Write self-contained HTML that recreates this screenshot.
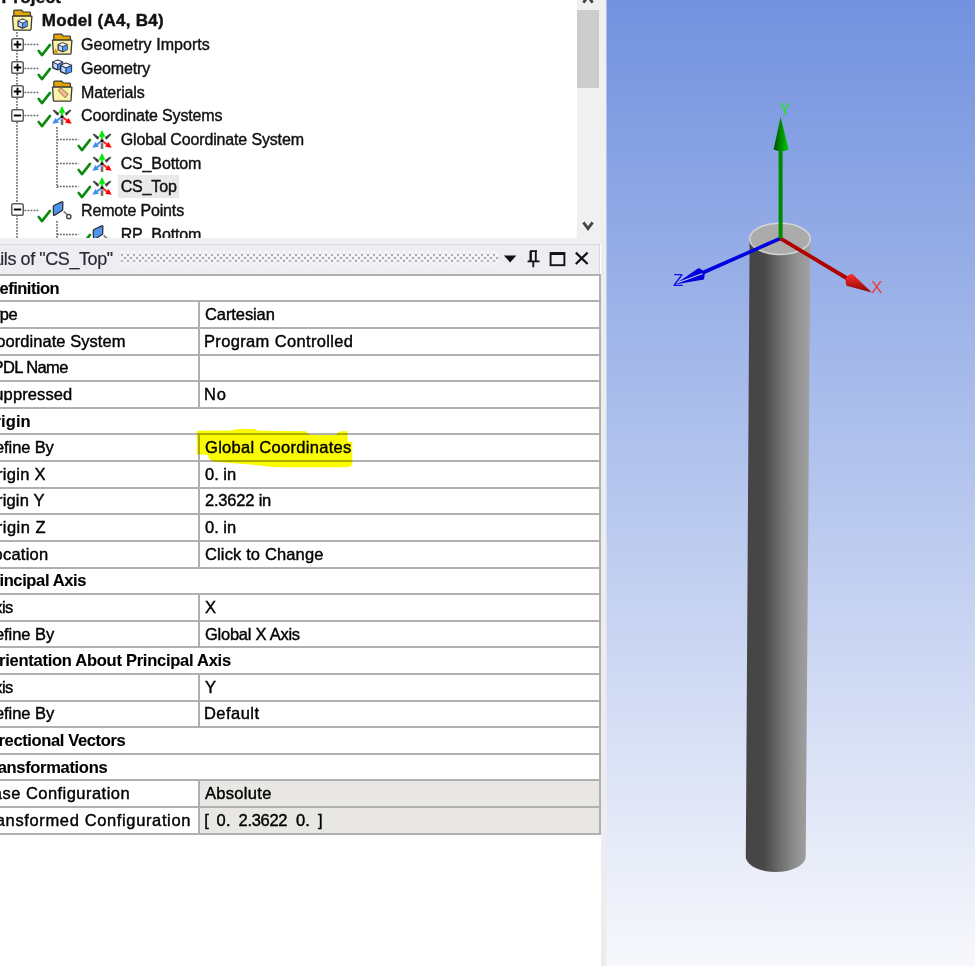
<!DOCTYPE html>
<html><head><meta charset="utf-8">
<style>
html,body{margin:0;padding:0;}
body{width:975px;height:966px;position:relative;overflow:hidden;background:#fff;font-family:"Liberation Sans",sans-serif;color:#000;}
.a{position:absolute;}
#tree{left:0;top:0;width:577px;height:238px;background:#fff;overflow:hidden;}
#sb{left:577px;top:0;width:29px;height:238px;background:#f0f0f0;}
#gap{left:0;top:238px;width:606px;height:6px;background:#f0f0f0;}
#strip{left:601px;top:238px;width:5px;height:728px;background:#ededef;}
#hdr{left:0;top:244px;width:599px;height:29px;background:#eeeef2;border-top:1px solid #d6d6e2;border-right:1px solid #d6d6e2;}
#vp{left:606px;top:0;width:369px;height:966px;background:linear-gradient(#7292df,#f7f8fc);}
.hl{position:absolute;left:0;width:600px;height:2px;background:#b0b0b0;}
.vl{position:absolute;width:2px;background:#b0b0b0;}
.ro{position:absolute;left:200px;width:399px;background:#e8e7e3;}
.lab{position:absolute;font-size:16.5px;white-space:pre;line-height:1;-webkit-text-stroke:0.4px #000;}
.val{position:absolute;left:204.5px;font-size:16.5px;letter-spacing:0.3px;white-space:pre;line-height:1;-webkit-text-stroke:0.4px #000;}
.b{font-weight:bold;-webkit-text-stroke:0.1px #000;}
.tt{position:absolute;font-size:16px;letter-spacing:-0.15px;white-space:pre;line-height:1;color:#111;-webkit-text-stroke:0.4px #111;}
svg{position:absolute;overflow:visible;}
</style></head><body>
<svg width="0" height="0" style="position:absolute">
<defs>
<symbol id="chk" viewBox="0 0 13 12" overflow="visible"><path d="M0.7 7.0 L4.0 11.1 L12.0 0.9" fill="none" stroke="#0d8a0d" stroke-width="2.6" stroke-linejoin="round" stroke-linecap="round"/></symbol>
<symbol id="plus" viewBox="0 0 13 13" overflow="visible"><rect x="0.75" y="0.75" width="11.5" height="11.5" rx="1.8" fill="#fff" stroke="#5e5e5e" stroke-width="1.5"/><path d="M2.8 6.5 H10.2 M6.5 2.8 V10.2" stroke="#000" stroke-width="1.9"/></symbol>
<symbol id="minus" viewBox="0 0 13 13" overflow="visible"><rect x="0.75" y="0.75" width="11.5" height="11.5" rx="1.8" fill="#fff" stroke="#5e5e5e" stroke-width="1.5"/><path d="M2.8 6.5 H10.2" stroke="#000" stroke-width="1.9"/></symbol>
<symbol id="folder" viewBox="0 0 20 20" overflow="visible">
<path d="M1.8 6 V1 Q1.8 0.2 2.6 0.2 H9.6 L11.2 2 H17.6 Q18.4 2 18.4 2.8 V6 Z" fill="#e3a500" stroke="#3a3a3a" stroke-width="1.2"/>
<path d="M0.5 6.2 H19.9 L19 19.4 Q18.9 20.1 18.2 20.1 H2.2 Q1.5 20.1 1.4 19.4 Z" fill="#fcf3a6" stroke="#3a3a3a" stroke-width="1.3" stroke-linejoin="round"/>
</symbol>
<symbol id="cube" viewBox="0 0 10 10" overflow="visible">
<path d="M5 0.5 L9.5 2.4 V7.6 L5 9.5 L0.5 7.6 V2.4 Z" fill="#bcd8ff" stroke="#2a2a3a" stroke-width="1.2" stroke-linejoin="round"/>
<path d="M5 4.6 V9.3 L9.3 7.5 V2.6 Z" fill="#4f98ff"/>
<path d="M0.8 2.5 L5 0.8 L9.2 2.5 L5 4.3 Z" fill="#eef4ff"/>
<path d="M0.6 2.5 L5 4.5 L9.4 2.5 M5 4.5 V9.4" fill="none" stroke="#2e2e40" stroke-width="0.9"/>
</symbol>
<symbol id="cs" viewBox="0 0 20 20" overflow="visible">
<path d="M1.2 4.6 L1.9 4.0 L6.8 7.4 L5.6 9.3 Z" fill="#3a3a3a" stroke="#3a3a3a" stroke-width="0.9" stroke-linejoin="round"/>
<path d="M18.8 4.6 L18.1 4.0 L13.2 7.4 L14.4 9.3 Z" fill="#3a3a3a" stroke="#3a3a3a" stroke-width="0.9" stroke-linejoin="round"/>
<path d="M10 13.2 V18.9" stroke="#707070" stroke-width="2.6"/>
<path d="M10 6 V10" stroke="#33e033" stroke-width="2.6"/>
<path d="M6.7 6.8 L10 0 L13.3 6.8 Z" fill="#00e800"/>
<path d="M9.2 11.4 L4.6 14.6" stroke="#5599ee" stroke-width="2.2"/>
<path d="M0.3 17.8 L3.4 11.9 L6.9 16.7 Z" fill="#3d8ef0"/>
<path d="M10.8 11.4 L15.4 14.6" stroke="#ff3333" stroke-width="2.2"/>
<path d="M19.7 17.8 L16.6 11.9 L13.1 16.7 Z" fill="#ff0000"/>
<circle cx="10" cy="10.8" r="1.5" fill="#111"/>
</symbol>
<symbol id="rp" viewBox="0 0 20 20" overflow="visible">
<path d="M11.6 11.4 L15.4 14.8" stroke="#777" stroke-width="1.5"/>
<circle cx="16.8" cy="16.6" r="2.1" fill="#fff" stroke="#4a4a4a" stroke-width="1.5"/>
<path d="M1.2 6.6 Q1.4 5.6 2.4 5.2 L9.8 1.9 Q10.9 1.5 10.9 2.6 L10.7 9.6 Q10.6 10.4 9.8 10.8 L2.6 15.2 Q1.6 15.8 1.5 14.6 Z" fill="#4d94ee" stroke="#2a2a2a" stroke-width="1.2" stroke-linejoin="round"/>
</symbol>
</defs>
</svg>
<div id="tree" class="a">
<svg style="left:0;top:0" width="577" height="238"><line x1="17" y1="32" x2="17" y2="240" stroke="#686868" stroke-width="1.6" stroke-dasharray="1.8 1.2"/></svg>
<svg style="left:0;top:0" width="577" height="238"><line x1="57" y1="127" x2="57" y2="188" stroke="#686868" stroke-width="1.6" stroke-dasharray="1.8 1.2"/></svg>
<svg style="left:0;top:0" width="577" height="238"><line x1="57" y1="221" x2="57" y2="240" stroke="#686868" stroke-width="1.6" stroke-dasharray="1.8 1.2"/></svg>
<div class="tt b" style="left:1.6px;top:-11.5px;font-size:17px;letter-spacing:0.3px">Project</div>
<svg style="left:12px;top:10.2px" width="20" height="20"><use href="#folder" width="20" height="20"/><use href="#cube" x="5.6" y="8.6" width="10" height="10"/></svg>
<div class="tt b" style="left:41.8px;top:11.8px;font-size:17px;letter-spacing:0.3px">Model (A4, B4)</div>
<svg style="left:0;top:0" width="577" height="238"><line x1="24.5" y1="44.5" x2="39" y2="44.5" stroke="#686868" stroke-width="1.6" stroke-dasharray="1.8 1.2"/></svg>
<svg style="left:10.5px;top:37.67px" width="13" height="13"><use href="#plus" width="13" height="13"/></svg>
<svg style="left:38px;top:44.17px" width="13" height="12"><use href="#chk" width="13" height="12"/></svg>
<svg style="left:52px;top:33.97px" width="20" height="20"><use href="#folder" width="20" height="20"/><use href="#cube" x="5.6" y="8.2" width="10" height="10"/><path d="M3.5 14 L4.6 16.4 L7 16.4 L5.2 17.8 L6 20 L3.8 18.6 L2 20 L2.6 17.8 L1 16.4 L3 16.4 Z" fill="#d98a00"/></svg>
<div class="tt" style="left:81px;letter-spacing:0.05px;top:37.27px">Geometry Imports</div>
<svg style="left:0;top:0" width="577" height="238"><line x1="24.5" y1="68.5" x2="39" y2="68.5" stroke="#686868" stroke-width="1.6" stroke-dasharray="1.8 1.2"/></svg>
<svg style="left:10.5px;top:61.34px" width="13" height="13"><use href="#plus" width="13" height="13"/></svg>
<svg style="left:38px;top:67.84px" width="13" height="12"><use href="#chk" width="13" height="12"/></svg>
<svg style="left:52px;top:59.34px" width="21" height="16"><use href="#cube" x="0.2" y="0.5" width="11" height="11"/><use href="#cube" x="8" y="3.5" width="12" height="12"/></svg>
<div class="tt" style="left:81px;top:60.94px">Geometry</div>
<svg style="left:0;top:0" width="577" height="238"><line x1="24.5" y1="92.5" x2="39" y2="92.5" stroke="#686868" stroke-width="1.6" stroke-dasharray="1.8 1.2"/></svg>
<svg style="left:10.5px;top:85.01px" width="13" height="13"><use href="#plus" width="13" height="13"/></svg>
<svg style="left:38px;top:91.51px" width="13" height="12"><use href="#chk" width="13" height="12"/></svg>
<svg style="left:52px;top:81.31px" width="20" height="20"><use href="#folder" width="20" height="20"/><path d="M6 9.5 L9 6.8 L16 13 L13.2 16.8 Z" fill="#f6b890" stroke="#8a7a50" stroke-width="1"/></svg>
<div class="tt" style="left:81px;top:84.61px">Materials</div>
<svg style="left:0;top:0" width="577" height="238"><line x1="24.5" y1="115.5" x2="39" y2="115.5" stroke="#686868" stroke-width="1.6" stroke-dasharray="1.8 1.2"/></svg>
<svg style="left:10.5px;top:108.68px" width="13" height="13"><use href="#minus" width="13" height="13"/></svg>
<svg style="left:38px;top:115.18px" width="13" height="12"><use href="#chk" width="13" height="12"/></svg>
<svg style="left:52px;top:105.88px" width="20" height="20"><use href="#cs" width="20" height="20"/></svg>
<div class="tt" style="left:81px;top:108.28px">Coordinate Systems</div>
<svg style="left:0;top:0" width="577" height="238"><line x1="57" y1="139.5" x2="78.5" y2="139.5" stroke="#686868" stroke-width="1.6" stroke-dasharray="1.8 1.2"/></svg>
<svg style="left:78px;top:138.85px" width="13" height="12"><use href="#chk" width="13" height="12"/></svg>
<svg style="left:92px;top:129.55px" width="20" height="20"><use href="#cs" width="20" height="20"/></svg>
<div class="tt" style="left:120.7px;top:131.95px">Global Coordinate System</div>
<svg style="left:0;top:0" width="577" height="238"><line x1="57" y1="163.5" x2="78.5" y2="163.5" stroke="#686868" stroke-width="1.6" stroke-dasharray="1.8 1.2"/></svg>
<svg style="left:78px;top:162.52px" width="13" height="12"><use href="#chk" width="13" height="12"/></svg>
<svg style="left:92px;top:153.22px" width="20" height="20"><use href="#cs" width="20" height="20"/></svg>
<div class="tt" style="left:120.7px;top:155.62px">CS_Bottom</div>
<svg style="left:0;top:0" width="577" height="238"><line x1="57" y1="186.5" x2="78.5" y2="186.5" stroke="#686868" stroke-width="1.6" stroke-dasharray="1.8 1.2"/></svg>
<div class="a" style="left:118px;top:174.5px;width:61px;height:23px;background:#e9e9e9"></div>
<svg style="left:78px;top:186.19px" width="13" height="12"><use href="#chk" width="13" height="12"/></svg>
<svg style="left:92px;top:176.89px" width="20" height="20"><use href="#cs" width="20" height="20"/></svg>
<div class="tt" style="left:120.7px;top:179.29px">CS_Top</div>
<svg style="left:0;top:0" width="577" height="238"><line x1="24.5" y1="210.5" x2="39" y2="210.5" stroke="#686868" stroke-width="1.6" stroke-dasharray="1.8 1.2"/></svg>
<svg style="left:10.5px;top:203.36px" width="13" height="13"><use href="#minus" width="13" height="13"/></svg>
<svg style="left:38px;top:209.86px" width="13" height="12"><use href="#chk" width="13" height="12"/></svg>
<svg style="left:52px;top:199.86px" width="20" height="20"><use href="#rp" width="20" height="20"/></svg>
<div class="tt" style="left:81px;top:202.96px">Remote Points</div>
<svg style="left:0;top:0" width="577" height="238"><line x1="57" y1="234.5" x2="78.5" y2="234.5" stroke="#686868" stroke-width="1.6" stroke-dasharray="1.8 1.2"/></svg>
<svg style="left:78px;top:233.53px" width="13" height="12"><use href="#chk" width="13" height="12"/></svg>
<svg style="left:92px;top:223.53px" width="20" height="20"><use href="#rp" width="20" height="20"/></svg>
<div class="tt" style="left:120.7px;top:226.63px">RP_Bottom</div>
</div>
<div id="sb" class="a"></div>
<div class="a" style="left:577px;top:10.3px;width:22px;height:78.1px;background:#cdcdcd"></div>
<svg style="left:0;top:0" width="606" height="238"><path d="M583.4 2.6 L588 -3.6 L592.6 2.6" fill="none" stroke="#444" stroke-width="2.8" stroke-linejoin="miter"/><path d="M583.4 222.4 L588 228.6 L592.6 222.4" fill="none" stroke="#444" stroke-width="2.8" stroke-linejoin="miter"/></svg>
<div id="gap" class="a"></div>
<div id="strip" class="a"></div>
<div id="hdr" class="a"></div>
<div class="a" style="left:-36px;top:249.5px;font-size:18px;letter-spacing:-0.43px;line-height:1;white-space:pre;color:#2a2a38;-webkit-text-stroke:0.2px #2a2a38">Details of "CS_Top"</div>
<svg style="left:0;top:0" width="600" height="274"><g fill="#fbfbfd"><rect x="121" y="251" width="2" height="2"/><rect x="121" y="263" width="2" height="2"/><rect x="121" y="257" width="2" height="2"/><rect x="124" y="254" width="2" height="2"/><rect x="124" y="260" width="2" height="2"/><rect x="127" y="251" width="2" height="2"/><rect x="127" y="263" width="2" height="2"/><rect x="127" y="257" width="2" height="2"/><rect x="130" y="254" width="2" height="2"/><rect x="130" y="260" width="2" height="2"/><rect x="133" y="251" width="2" height="2"/><rect x="133" y="263" width="2" height="2"/><rect x="133" y="257" width="2" height="2"/><rect x="136" y="254" width="2" height="2"/><rect x="136" y="260" width="2" height="2"/><rect x="139" y="251" width="2" height="2"/><rect x="139" y="263" width="2" height="2"/><rect x="139" y="257" width="2" height="2"/><rect x="142" y="254" width="2" height="2"/><rect x="142" y="260" width="2" height="2"/><rect x="145" y="251" width="2" height="2"/><rect x="145" y="263" width="2" height="2"/><rect x="145" y="257" width="2" height="2"/><rect x="148" y="254" width="2" height="2"/><rect x="148" y="260" width="2" height="2"/><rect x="151" y="251" width="2" height="2"/><rect x="151" y="263" width="2" height="2"/><rect x="151" y="257" width="2" height="2"/><rect x="154" y="254" width="2" height="2"/><rect x="154" y="260" width="2" height="2"/><rect x="157" y="251" width="2" height="2"/><rect x="157" y="263" width="2" height="2"/><rect x="157" y="257" width="2" height="2"/><rect x="160" y="254" width="2" height="2"/><rect x="160" y="260" width="2" height="2"/><rect x="163" y="251" width="2" height="2"/><rect x="163" y="263" width="2" height="2"/><rect x="163" y="257" width="2" height="2"/><rect x="166" y="254" width="2" height="2"/><rect x="166" y="260" width="2" height="2"/><rect x="169" y="251" width="2" height="2"/><rect x="169" y="263" width="2" height="2"/><rect x="169" y="257" width="2" height="2"/><rect x="172" y="254" width="2" height="2"/><rect x="172" y="260" width="2" height="2"/><rect x="175" y="251" width="2" height="2"/><rect x="175" y="263" width="2" height="2"/><rect x="175" y="257" width="2" height="2"/><rect x="178" y="254" width="2" height="2"/><rect x="178" y="260" width="2" height="2"/><rect x="181" y="251" width="2" height="2"/><rect x="181" y="263" width="2" height="2"/><rect x="181" y="257" width="2" height="2"/><rect x="184" y="254" width="2" height="2"/><rect x="184" y="260" width="2" height="2"/><rect x="187" y="251" width="2" height="2"/><rect x="187" y="263" width="2" height="2"/><rect x="187" y="257" width="2" height="2"/><rect x="190" y="254" width="2" height="2"/><rect x="190" y="260" width="2" height="2"/><rect x="193" y="251" width="2" height="2"/><rect x="193" y="263" width="2" height="2"/><rect x="193" y="257" width="2" height="2"/><rect x="196" y="254" width="2" height="2"/><rect x="196" y="260" width="2" height="2"/><rect x="199" y="251" width="2" height="2"/><rect x="199" y="263" width="2" height="2"/><rect x="199" y="257" width="2" height="2"/><rect x="202" y="254" width="2" height="2"/><rect x="202" y="260" width="2" height="2"/><rect x="205" y="251" width="2" height="2"/><rect x="205" y="263" width="2" height="2"/><rect x="205" y="257" width="2" height="2"/><rect x="208" y="254" width="2" height="2"/><rect x="208" y="260" width="2" height="2"/><rect x="211" y="251" width="2" height="2"/><rect x="211" y="263" width="2" height="2"/><rect x="211" y="257" width="2" height="2"/><rect x="214" y="254" width="2" height="2"/><rect x="214" y="260" width="2" height="2"/><rect x="217" y="251" width="2" height="2"/><rect x="217" y="263" width="2" height="2"/><rect x="217" y="257" width="2" height="2"/><rect x="220" y="254" width="2" height="2"/><rect x="220" y="260" width="2" height="2"/><rect x="223" y="251" width="2" height="2"/><rect x="223" y="263" width="2" height="2"/><rect x="223" y="257" width="2" height="2"/><rect x="226" y="254" width="2" height="2"/><rect x="226" y="260" width="2" height="2"/><rect x="229" y="251" width="2" height="2"/><rect x="229" y="263" width="2" height="2"/><rect x="229" y="257" width="2" height="2"/><rect x="232" y="254" width="2" height="2"/><rect x="232" y="260" width="2" height="2"/><rect x="235" y="251" width="2" height="2"/><rect x="235" y="263" width="2" height="2"/><rect x="235" y="257" width="2" height="2"/><rect x="238" y="254" width="2" height="2"/><rect x="238" y="260" width="2" height="2"/><rect x="241" y="251" width="2" height="2"/><rect x="241" y="263" width="2" height="2"/><rect x="241" y="257" width="2" height="2"/><rect x="244" y="254" width="2" height="2"/><rect x="244" y="260" width="2" height="2"/><rect x="247" y="251" width="2" height="2"/><rect x="247" y="263" width="2" height="2"/><rect x="247" y="257" width="2" height="2"/><rect x="250" y="254" width="2" height="2"/><rect x="250" y="260" width="2" height="2"/><rect x="253" y="251" width="2" height="2"/><rect x="253" y="263" width="2" height="2"/><rect x="253" y="257" width="2" height="2"/><rect x="256" y="254" width="2" height="2"/><rect x="256" y="260" width="2" height="2"/><rect x="259" y="251" width="2" height="2"/><rect x="259" y="263" width="2" height="2"/><rect x="259" y="257" width="2" height="2"/><rect x="262" y="254" width="2" height="2"/><rect x="262" y="260" width="2" height="2"/><rect x="265" y="251" width="2" height="2"/><rect x="265" y="263" width="2" height="2"/><rect x="265" y="257" width="2" height="2"/><rect x="268" y="254" width="2" height="2"/><rect x="268" y="260" width="2" height="2"/><rect x="271" y="251" width="2" height="2"/><rect x="271" y="263" width="2" height="2"/><rect x="271" y="257" width="2" height="2"/><rect x="274" y="254" width="2" height="2"/><rect x="274" y="260" width="2" height="2"/><rect x="277" y="251" width="2" height="2"/><rect x="277" y="263" width="2" height="2"/><rect x="277" y="257" width="2" height="2"/><rect x="280" y="254" width="2" height="2"/><rect x="280" y="260" width="2" height="2"/><rect x="283" y="251" width="2" height="2"/><rect x="283" y="263" width="2" height="2"/><rect x="283" y="257" width="2" height="2"/><rect x="286" y="254" width="2" height="2"/><rect x="286" y="260" width="2" height="2"/><rect x="289" y="251" width="2" height="2"/><rect x="289" y="263" width="2" height="2"/><rect x="289" y="257" width="2" height="2"/><rect x="292" y="254" width="2" height="2"/><rect x="292" y="260" width="2" height="2"/><rect x="295" y="251" width="2" height="2"/><rect x="295" y="263" width="2" height="2"/><rect x="295" y="257" width="2" height="2"/><rect x="298" y="254" width="2" height="2"/><rect x="298" y="260" width="2" height="2"/><rect x="301" y="251" width="2" height="2"/><rect x="301" y="263" width="2" height="2"/><rect x="301" y="257" width="2" height="2"/><rect x="304" y="254" width="2" height="2"/><rect x="304" y="260" width="2" height="2"/><rect x="307" y="251" width="2" height="2"/><rect x="307" y="263" width="2" height="2"/><rect x="307" y="257" width="2" height="2"/><rect x="310" y="254" width="2" height="2"/><rect x="310" y="260" width="2" height="2"/><rect x="313" y="251" width="2" height="2"/><rect x="313" y="263" width="2" height="2"/><rect x="313" y="257" width="2" height="2"/><rect x="316" y="254" width="2" height="2"/><rect x="316" y="260" width="2" height="2"/><rect x="319" y="251" width="2" height="2"/><rect x="319" y="263" width="2" height="2"/><rect x="319" y="257" width="2" height="2"/><rect x="322" y="254" width="2" height="2"/><rect x="322" y="260" width="2" height="2"/><rect x="325" y="251" width="2" height="2"/><rect x="325" y="263" width="2" height="2"/><rect x="325" y="257" width="2" height="2"/><rect x="328" y="254" width="2" height="2"/><rect x="328" y="260" width="2" height="2"/><rect x="331" y="251" width="2" height="2"/><rect x="331" y="263" width="2" height="2"/><rect x="331" y="257" width="2" height="2"/><rect x="334" y="254" width="2" height="2"/><rect x="334" y="260" width="2" height="2"/><rect x="337" y="251" width="2" height="2"/><rect x="337" y="263" width="2" height="2"/><rect x="337" y="257" width="2" height="2"/><rect x="340" y="254" width="2" height="2"/><rect x="340" y="260" width="2" height="2"/><rect x="343" y="251" width="2" height="2"/><rect x="343" y="263" width="2" height="2"/><rect x="343" y="257" width="2" height="2"/><rect x="346" y="254" width="2" height="2"/><rect x="346" y="260" width="2" height="2"/><rect x="349" y="251" width="2" height="2"/><rect x="349" y="263" width="2" height="2"/><rect x="349" y="257" width="2" height="2"/><rect x="352" y="254" width="2" height="2"/><rect x="352" y="260" width="2" height="2"/><rect x="355" y="251" width="2" height="2"/><rect x="355" y="263" width="2" height="2"/><rect x="355" y="257" width="2" height="2"/><rect x="358" y="254" width="2" height="2"/><rect x="358" y="260" width="2" height="2"/><rect x="361" y="251" width="2" height="2"/><rect x="361" y="263" width="2" height="2"/><rect x="361" y="257" width="2" height="2"/><rect x="364" y="254" width="2" height="2"/><rect x="364" y="260" width="2" height="2"/><rect x="367" y="251" width="2" height="2"/><rect x="367" y="263" width="2" height="2"/><rect x="367" y="257" width="2" height="2"/><rect x="370" y="254" width="2" height="2"/><rect x="370" y="260" width="2" height="2"/><rect x="373" y="251" width="2" height="2"/><rect x="373" y="263" width="2" height="2"/><rect x="373" y="257" width="2" height="2"/><rect x="376" y="254" width="2" height="2"/><rect x="376" y="260" width="2" height="2"/><rect x="379" y="251" width="2" height="2"/><rect x="379" y="263" width="2" height="2"/><rect x="379" y="257" width="2" height="2"/><rect x="382" y="254" width="2" height="2"/><rect x="382" y="260" width="2" height="2"/><rect x="385" y="251" width="2" height="2"/><rect x="385" y="263" width="2" height="2"/><rect x="385" y="257" width="2" height="2"/><rect x="388" y="254" width="2" height="2"/><rect x="388" y="260" width="2" height="2"/><rect x="391" y="251" width="2" height="2"/><rect x="391" y="263" width="2" height="2"/><rect x="391" y="257" width="2" height="2"/><rect x="394" y="254" width="2" height="2"/><rect x="394" y="260" width="2" height="2"/><rect x="397" y="251" width="2" height="2"/><rect x="397" y="263" width="2" height="2"/><rect x="397" y="257" width="2" height="2"/><rect x="400" y="254" width="2" height="2"/><rect x="400" y="260" width="2" height="2"/><rect x="403" y="251" width="2" height="2"/><rect x="403" y="263" width="2" height="2"/><rect x="403" y="257" width="2" height="2"/><rect x="406" y="254" width="2" height="2"/><rect x="406" y="260" width="2" height="2"/><rect x="409" y="251" width="2" height="2"/><rect x="409" y="263" width="2" height="2"/><rect x="409" y="257" width="2" height="2"/><rect x="412" y="254" width="2" height="2"/><rect x="412" y="260" width="2" height="2"/><rect x="415" y="251" width="2" height="2"/><rect x="415" y="263" width="2" height="2"/><rect x="415" y="257" width="2" height="2"/><rect x="418" y="254" width="2" height="2"/><rect x="418" y="260" width="2" height="2"/><rect x="421" y="251" width="2" height="2"/><rect x="421" y="263" width="2" height="2"/><rect x="421" y="257" width="2" height="2"/><rect x="424" y="254" width="2" height="2"/><rect x="424" y="260" width="2" height="2"/><rect x="427" y="251" width="2" height="2"/><rect x="427" y="263" width="2" height="2"/><rect x="427" y="257" width="2" height="2"/><rect x="430" y="254" width="2" height="2"/><rect x="430" y="260" width="2" height="2"/><rect x="433" y="251" width="2" height="2"/><rect x="433" y="263" width="2" height="2"/><rect x="433" y="257" width="2" height="2"/><rect x="436" y="254" width="2" height="2"/><rect x="436" y="260" width="2" height="2"/><rect x="439" y="251" width="2" height="2"/><rect x="439" y="263" width="2" height="2"/><rect x="439" y="257" width="2" height="2"/><rect x="442" y="254" width="2" height="2"/><rect x="442" y="260" width="2" height="2"/><rect x="445" y="251" width="2" height="2"/><rect x="445" y="263" width="2" height="2"/><rect x="445" y="257" width="2" height="2"/><rect x="448" y="254" width="2" height="2"/><rect x="448" y="260" width="2" height="2"/><rect x="451" y="251" width="2" height="2"/><rect x="451" y="263" width="2" height="2"/><rect x="451" y="257" width="2" height="2"/><rect x="454" y="254" width="2" height="2"/><rect x="454" y="260" width="2" height="2"/><rect x="457" y="251" width="2" height="2"/><rect x="457" y="263" width="2" height="2"/><rect x="457" y="257" width="2" height="2"/><rect x="460" y="254" width="2" height="2"/><rect x="460" y="260" width="2" height="2"/><rect x="463" y="251" width="2" height="2"/><rect x="463" y="263" width="2" height="2"/><rect x="463" y="257" width="2" height="2"/><rect x="466" y="254" width="2" height="2"/><rect x="466" y="260" width="2" height="2"/><rect x="469" y="251" width="2" height="2"/><rect x="469" y="263" width="2" height="2"/><rect x="469" y="257" width="2" height="2"/><rect x="472" y="254" width="2" height="2"/><rect x="472" y="260" width="2" height="2"/><rect x="475" y="251" width="2" height="2"/><rect x="475" y="263" width="2" height="2"/><rect x="475" y="257" width="2" height="2"/><rect x="478" y="254" width="2" height="2"/><rect x="478" y="260" width="2" height="2"/><rect x="481" y="251" width="2" height="2"/><rect x="481" y="263" width="2" height="2"/><rect x="481" y="257" width="2" height="2"/><rect x="484" y="254" width="2" height="2"/><rect x="484" y="260" width="2" height="2"/><rect x="487" y="251" width="2" height="2"/><rect x="487" y="263" width="2" height="2"/><rect x="487" y="257" width="2" height="2"/><rect x="490" y="254" width="2" height="2"/><rect x="490" y="260" width="2" height="2"/><rect x="493" y="251" width="2" height="2"/><rect x="493" y="263" width="2" height="2"/><rect x="493" y="257" width="2" height="2"/><rect x="496" y="254" width="2" height="2"/><rect x="496" y="260" width="2" height="2"/></g><g fill="#b0b0b4"><rect x="121" y="254" width="2" height="2"/><rect x="121" y="260" width="2" height="2"/><rect x="124" y="257" width="2" height="2"/><rect x="127" y="254" width="2" height="2"/><rect x="127" y="260" width="2" height="2"/><rect x="130" y="257" width="2" height="2"/><rect x="133" y="254" width="2" height="2"/><rect x="133" y="260" width="2" height="2"/><rect x="136" y="257" width="2" height="2"/><rect x="139" y="254" width="2" height="2"/><rect x="139" y="260" width="2" height="2"/><rect x="142" y="257" width="2" height="2"/><rect x="145" y="254" width="2" height="2"/><rect x="145" y="260" width="2" height="2"/><rect x="148" y="257" width="2" height="2"/><rect x="151" y="254" width="2" height="2"/><rect x="151" y="260" width="2" height="2"/><rect x="154" y="257" width="2" height="2"/><rect x="157" y="254" width="2" height="2"/><rect x="157" y="260" width="2" height="2"/><rect x="160" y="257" width="2" height="2"/><rect x="163" y="254" width="2" height="2"/><rect x="163" y="260" width="2" height="2"/><rect x="166" y="257" width="2" height="2"/><rect x="169" y="254" width="2" height="2"/><rect x="169" y="260" width="2" height="2"/><rect x="172" y="257" width="2" height="2"/><rect x="175" y="254" width="2" height="2"/><rect x="175" y="260" width="2" height="2"/><rect x="178" y="257" width="2" height="2"/><rect x="181" y="254" width="2" height="2"/><rect x="181" y="260" width="2" height="2"/><rect x="184" y="257" width="2" height="2"/><rect x="187" y="254" width="2" height="2"/><rect x="187" y="260" width="2" height="2"/><rect x="190" y="257" width="2" height="2"/><rect x="193" y="254" width="2" height="2"/><rect x="193" y="260" width="2" height="2"/><rect x="196" y="257" width="2" height="2"/><rect x="199" y="254" width="2" height="2"/><rect x="199" y="260" width="2" height="2"/><rect x="202" y="257" width="2" height="2"/><rect x="205" y="254" width="2" height="2"/><rect x="205" y="260" width="2" height="2"/><rect x="208" y="257" width="2" height="2"/><rect x="211" y="254" width="2" height="2"/><rect x="211" y="260" width="2" height="2"/><rect x="214" y="257" width="2" height="2"/><rect x="217" y="254" width="2" height="2"/><rect x="217" y="260" width="2" height="2"/><rect x="220" y="257" width="2" height="2"/><rect x="223" y="254" width="2" height="2"/><rect x="223" y="260" width="2" height="2"/><rect x="226" y="257" width="2" height="2"/><rect x="229" y="254" width="2" height="2"/><rect x="229" y="260" width="2" height="2"/><rect x="232" y="257" width="2" height="2"/><rect x="235" y="254" width="2" height="2"/><rect x="235" y="260" width="2" height="2"/><rect x="238" y="257" width="2" height="2"/><rect x="241" y="254" width="2" height="2"/><rect x="241" y="260" width="2" height="2"/><rect x="244" y="257" width="2" height="2"/><rect x="247" y="254" width="2" height="2"/><rect x="247" y="260" width="2" height="2"/><rect x="250" y="257" width="2" height="2"/><rect x="253" y="254" width="2" height="2"/><rect x="253" y="260" width="2" height="2"/><rect x="256" y="257" width="2" height="2"/><rect x="259" y="254" width="2" height="2"/><rect x="259" y="260" width="2" height="2"/><rect x="262" y="257" width="2" height="2"/><rect x="265" y="254" width="2" height="2"/><rect x="265" y="260" width="2" height="2"/><rect x="268" y="257" width="2" height="2"/><rect x="271" y="254" width="2" height="2"/><rect x="271" y="260" width="2" height="2"/><rect x="274" y="257" width="2" height="2"/><rect x="277" y="254" width="2" height="2"/><rect x="277" y="260" width="2" height="2"/><rect x="280" y="257" width="2" height="2"/><rect x="283" y="254" width="2" height="2"/><rect x="283" y="260" width="2" height="2"/><rect x="286" y="257" width="2" height="2"/><rect x="289" y="254" width="2" height="2"/><rect x="289" y="260" width="2" height="2"/><rect x="292" y="257" width="2" height="2"/><rect x="295" y="254" width="2" height="2"/><rect x="295" y="260" width="2" height="2"/><rect x="298" y="257" width="2" height="2"/><rect x="301" y="254" width="2" height="2"/><rect x="301" y="260" width="2" height="2"/><rect x="304" y="257" width="2" height="2"/><rect x="307" y="254" width="2" height="2"/><rect x="307" y="260" width="2" height="2"/><rect x="310" y="257" width="2" height="2"/><rect x="313" y="254" width="2" height="2"/><rect x="313" y="260" width="2" height="2"/><rect x="316" y="257" width="2" height="2"/><rect x="319" y="254" width="2" height="2"/><rect x="319" y="260" width="2" height="2"/><rect x="322" y="257" width="2" height="2"/><rect x="325" y="254" width="2" height="2"/><rect x="325" y="260" width="2" height="2"/><rect x="328" y="257" width="2" height="2"/><rect x="331" y="254" width="2" height="2"/><rect x="331" y="260" width="2" height="2"/><rect x="334" y="257" width="2" height="2"/><rect x="337" y="254" width="2" height="2"/><rect x="337" y="260" width="2" height="2"/><rect x="340" y="257" width="2" height="2"/><rect x="343" y="254" width="2" height="2"/><rect x="343" y="260" width="2" height="2"/><rect x="346" y="257" width="2" height="2"/><rect x="349" y="254" width="2" height="2"/><rect x="349" y="260" width="2" height="2"/><rect x="352" y="257" width="2" height="2"/><rect x="355" y="254" width="2" height="2"/><rect x="355" y="260" width="2" height="2"/><rect x="358" y="257" width="2" height="2"/><rect x="361" y="254" width="2" height="2"/><rect x="361" y="260" width="2" height="2"/><rect x="364" y="257" width="2" height="2"/><rect x="367" y="254" width="2" height="2"/><rect x="367" y="260" width="2" height="2"/><rect x="370" y="257" width="2" height="2"/><rect x="373" y="254" width="2" height="2"/><rect x="373" y="260" width="2" height="2"/><rect x="376" y="257" width="2" height="2"/><rect x="379" y="254" width="2" height="2"/><rect x="379" y="260" width="2" height="2"/><rect x="382" y="257" width="2" height="2"/><rect x="385" y="254" width="2" height="2"/><rect x="385" y="260" width="2" height="2"/><rect x="388" y="257" width="2" height="2"/><rect x="391" y="254" width="2" height="2"/><rect x="391" y="260" width="2" height="2"/><rect x="394" y="257" width="2" height="2"/><rect x="397" y="254" width="2" height="2"/><rect x="397" y="260" width="2" height="2"/><rect x="400" y="257" width="2" height="2"/><rect x="403" y="254" width="2" height="2"/><rect x="403" y="260" width="2" height="2"/><rect x="406" y="257" width="2" height="2"/><rect x="409" y="254" width="2" height="2"/><rect x="409" y="260" width="2" height="2"/><rect x="412" y="257" width="2" height="2"/><rect x="415" y="254" width="2" height="2"/><rect x="415" y="260" width="2" height="2"/><rect x="418" y="257" width="2" height="2"/><rect x="421" y="254" width="2" height="2"/><rect x="421" y="260" width="2" height="2"/><rect x="424" y="257" width="2" height="2"/><rect x="427" y="254" width="2" height="2"/><rect x="427" y="260" width="2" height="2"/><rect x="430" y="257" width="2" height="2"/><rect x="433" y="254" width="2" height="2"/><rect x="433" y="260" width="2" height="2"/><rect x="436" y="257" width="2" height="2"/><rect x="439" y="254" width="2" height="2"/><rect x="439" y="260" width="2" height="2"/><rect x="442" y="257" width="2" height="2"/><rect x="445" y="254" width="2" height="2"/><rect x="445" y="260" width="2" height="2"/><rect x="448" y="257" width="2" height="2"/><rect x="451" y="254" width="2" height="2"/><rect x="451" y="260" width="2" height="2"/><rect x="454" y="257" width="2" height="2"/><rect x="457" y="254" width="2" height="2"/><rect x="457" y="260" width="2" height="2"/><rect x="460" y="257" width="2" height="2"/><rect x="463" y="254" width="2" height="2"/><rect x="463" y="260" width="2" height="2"/><rect x="466" y="257" width="2" height="2"/><rect x="469" y="254" width="2" height="2"/><rect x="469" y="260" width="2" height="2"/><rect x="472" y="257" width="2" height="2"/><rect x="475" y="254" width="2" height="2"/><rect x="475" y="260" width="2" height="2"/><rect x="478" y="257" width="2" height="2"/><rect x="481" y="254" width="2" height="2"/><rect x="481" y="260" width="2" height="2"/><rect x="484" y="257" width="2" height="2"/><rect x="487" y="254" width="2" height="2"/><rect x="487" y="260" width="2" height="2"/><rect x="490" y="257" width="2" height="2"/><rect x="493" y="254" width="2" height="2"/><rect x="493" y="260" width="2" height="2"/><rect x="496" y="257" width="2" height="2"/></g></svg>
<svg style="left:0;top:0" width="600" height="274"><path d="M503.8 255.6 H516.4 L510.1 262.4 Z" fill="#111"/><path d="M530 251.2 H537 M530.4 251 V261 M535.8 251 V261 M527.6 261.4 H539.6 M533.3 261.4 V267.2" fill="none" stroke="#111" stroke-width="1.8"/><path d="M531.2 252 V260.5" stroke="#111" stroke-width="1.2"/><rect x="550.6" y="253" width="13.8" height="12.2" fill="none" stroke="#111" stroke-width="1.9"/><path d="M550.6 254.2 H564.4" stroke="#111" stroke-width="1.6"/><path d="M575.8 252.6 L587.6 264 M587.6 252.6 L575.8 264" stroke="#111" stroke-width="2.2"/></svg>
<div id="vp" class="a"></div>
<div class="a" style="left:606px;top:0;width:1px;height:966px;background:rgba(237,237,239,0.45)"></div>
<svg style="left:0;top:0" width="975" height="966">
<defs>
<linearGradient id="cyl" x1="0" x2="1" y1="0" y2="0">
<stop offset="0" stop-color="#444"/><stop offset="0.28" stop-color="#484848"/><stop offset="0.5" stop-color="#6a6a6a"/><stop offset="0.8" stop-color="#939393"/><stop offset="1" stop-color="#a3a3a3"/>
</linearGradient>
<linearGradient id="yg" x1="0" x2="1" y1="0" y2="0"><stop offset="0" stop-color="#005000"/><stop offset="0.5" stop-color="#008c00"/><stop offset="1" stop-color="#00d000"/></linearGradient>
<linearGradient id="xg" x1="0" x2="0" y1="0" y2="1"><stop offset="0" stop-color="#ff3030"/><stop offset="1" stop-color="#8a0000"/></linearGradient>
<linearGradient id="zg" x1="0" x2="0" y1="0" y2="1"><stop offset="0" stop-color="#c8c8ff"/><stop offset="0.4" stop-color="#2020ff"/><stop offset="1" stop-color="#0000a0"/></linearGradient>
</defs>
<path d="M749.6 238.9 L745.8 857.4 A30 15.6 0 0 0 805.7 857.4 L810.4 238.9 Z" fill="url(#cyl)"/>
<ellipse cx="779.9" cy="238.9" rx="30.2" ry="15.6" fill="#ababab" stroke="#d6d6d6" stroke-width="1.5"/>
<path d="M780.4 238.4 L701 273.5" stroke="#0000e0" stroke-width="3.6"/>
<path d="M674.8 284.5 L698.2 268.2 Q707 270 703.8 279.6 Z" fill="#0000d8"/><path d="M677 283 L702 273.8" stroke="#c8c8ff" stroke-width="1.2" stroke-linecap="round"/>
<path d="M780.4 238.4 L849 279.5" stroke="#b00000" stroke-width="3.8"/>
<path d="M871.8 292.6 L852.2 273.8 Q843 276 846.6 285.8 Z" fill="url(#xg)"/>
<path d="M780.6 238.4 V148" stroke="#008800" stroke-width="4"/>
<path d="M773.6 149.4 L780.6 117 L788.6 149.4 Q781 152.4 773.6 149.4 Z" fill="url(#yg)"/>
<text x="779" y="114.6" font-family="Liberation Sans" font-size="17" fill="#20e820">Y</text>
<text x="871" y="293" font-family="Liberation Sans" font-size="17" fill="#f03a3a">X</text>
<text x="673" y="285.6" font-family="Liberation Sans" font-size="17" fill="#1010f0">Z</text>
</svg>
<div class="a" style="left:0;top:274px;width:601px;height:692px;background:#fff"></div>
<div class="hl" style="top:273.70px"></div>
<div class="lab b" style="left:-11.92px;letter-spacing:-0.497px;top:279.50px">Definition</div>
<div class="hl" style="top:300.32px"></div>
<div class="vl" style="left:198px;top:300.32px;height:28.62px"></div>
<div class="lab" style="left:-16.36px;letter-spacing:-0.600px;top:306.12px">Type</div>
<div class="val" style="left:205.00px;letter-spacing:-0.092px;top:306.12px">Cartesian</div>
<div class="hl" style="top:326.94px"></div>
<div class="vl" style="left:198px;top:326.94px;height:28.62px"></div>
<div class="lab" style="left:-15.81px;letter-spacing:0.059px;top:332.74px">Coordinate System</div>
<div class="val" style="left:204.00px;letter-spacing:0.348px;top:332.74px">Program Controlled</div>
<div class="hl" style="top:353.56px"></div>
<div class="vl" style="left:198px;top:353.56px;height:28.62px"></div>
<div class="lab" style="left:-17.87px;letter-spacing:-0.600px;top:359.36px">APDL Name</div>
<div class="hl" style="top:380.18px"></div>
<div class="vl" style="left:198px;top:380.18px;height:28.62px"></div>
<div class="lab" style="left:-16.78px;letter-spacing:0.100px;top:385.98px">Suppressed</div>
<div class="val" style="left:204.04px;letter-spacing:0.800px;top:385.98px">No</div>
<div class="hl" style="top:406.80px"></div>
<div class="lab b" style="left:-18.32px;letter-spacing:0.084px;top:412.60px">Origin</div>
<div class="hl" style="top:433.42px"></div>
<div class="vl" style="left:198px;top:433.42px;height:28.62px"></div>
<div class="lab" style="left:-16.76px;letter-spacing:-0.115px;top:439.22px">Define By</div>
<div class="val" style="left:205.00px;letter-spacing:0.294px;top:439.22px">Global Coordinates</div>
<div class="hl" style="top:460.04px"></div>
<div class="vl" style="left:198px;top:460.04px;height:28.62px"></div>
<div class="lab" style="left:-16.24px;letter-spacing:0.306px;top:465.84px">Origin X</div>
<div class="val" style="left:205.00px;letter-spacing:-0.028px;top:465.84px">0. in</div>
<div class="hl" style="top:486.66px"></div>
<div class="vl" style="left:198px;top:486.66px;height:28.62px"></div>
<div class="lab" style="left:-15.92px;letter-spacing:0.146px;top:492.46px">Origin Y</div>
<div class="val" style="left:205.00px;letter-spacing:-0.202px;top:492.46px">2.3622 in</div>
<div class="hl" style="top:513.28px"></div>
<div class="vl" style="left:198px;top:513.28px;height:28.62px"></div>
<div class="lab" style="left:-16.64px;letter-spacing:0.506px;top:519.08px">Origin Z</div>
<div class="val" style="left:205.00px;letter-spacing:-0.028px;top:519.08px">0. in</div>
<div class="hl" style="top:539.90px"></div>
<div class="vl" style="left:198px;top:539.90px;height:28.62px"></div>
<div class="lab" style="left:-15.95px;letter-spacing:0.249px;top:545.70px">Location</div>
<div class="val" style="left:205.00px;letter-spacing:0.136px;top:545.70px">Click to Change</div>
<div class="hl" style="top:566.52px"></div>
<div class="lab b" style="left:-17.29px;letter-spacing:-0.366px;top:572.32px">Principal Axis</div>
<div class="hl" style="top:593.14px"></div>
<div class="vl" style="left:198px;top:593.14px;height:28.62px"></div>
<div class="lab" style="left:-16.04px;letter-spacing:-0.600px;top:598.94px">Axis</div>
<div class="val" style="left:205.00px;letter-spacing:0.000px;top:598.94px">X</div>
<div class="hl" style="top:619.76px"></div>
<div class="vl" style="left:198px;top:619.76px;height:28.62px"></div>
<div class="lab" style="left:-16.86px;letter-spacing:-0.065px;top:625.56px">Define By</div>
<div class="val" style="left:205.00px;letter-spacing:-0.258px;top:625.56px">Global X Axis</div>
<div class="hl" style="top:646.38px"></div>
<div class="lab b" style="left:-13.53px;letter-spacing:-0.263px;top:652.18px">Orientation About Principal Axis</div>
<div class="hl" style="top:673.00px"></div>
<div class="vl" style="left:198px;top:673.00px;height:28.62px"></div>
<div class="lab" style="left:-16.04px;letter-spacing:-0.600px;top:678.80px">Axis</div>
<div class="val" style="left:205.00px;letter-spacing:0.000px;top:678.80px">Y</div>
<div class="hl" style="top:699.62px"></div>
<div class="vl" style="left:198px;top:699.62px;height:28.62px"></div>
<div class="lab" style="left:-16.86px;letter-spacing:-0.065px;top:705.42px">Define By</div>
<div class="val" style="left:204.00px;letter-spacing:0.451px;top:705.42px">Default</div>
<div class="hl" style="top:726.24px"></div>
<div class="lab b" style="left:-17.23px;letter-spacing:-0.365px;top:732.04px">Directional Vectors</div>
<div class="hl" style="top:752.86px"></div>
<div class="lab b" style="left:-17.33px;letter-spacing:-0.312px;top:758.66px">Transformations</div>
<div class="ro" style="top:781.48px;height:24.62px"></div>
<div class="hl" style="top:779.48px"></div>
<div class="vl" style="left:198px;top:779.48px;height:28.62px"></div>
<div class="lab" style="left:-18.60px;letter-spacing:0.461px;top:785.28px">Base Configuration</div>
<div class="val" style="left:205.00px;letter-spacing:0.309px;top:785.28px">Absolute</div>
<div class="ro" style="top:808.10px;height:24.62px"></div>
<div class="hl" style="top:806.10px"></div>
<div class="vl" style="left:198px;top:806.10px;height:28.62px"></div>
<div class="lab" style="left:-20.43px;letter-spacing:0.632px;top:811.90px">Transformed Configuration</div>
<div class="val" style="left:204.3px;top:811.90px">[</div>
<div class="val" style="left:216.5px;top:811.90px">0.</div>
<div class="val" style="left:238.5px;letter-spacing:-0.3px;top:811.90px">2.3622</div>
<div class="val" style="left:295.9px;top:811.90px">0.</div>
<div class="val" style="left:317.9px;top:811.90px">]</div>
<div class="hl" style="top:832.72px"></div>
<div class="vl" style="left:598.5px;top:273.70px;height:561.02px"></div>
<svg style="left:0;top:0;mix-blend-mode:multiply" width="600" height="700"><path d="M196.9 430.8 L232 430.5 Q234 428.9 240 428.9 L254 428.9 Q257 430.8 262 430.8 L306 431.2 Q308 434.9 312 434.9 L336 434.9 Q338 431.2 341 431.2 L347.6 431.2 L347.6 441.8 L352.2 442 L352.2 464.5 Q351 467.2 346 467.2 L278 467.2 Q262 466 250 464.5 L215 461.7 Q208 460 208 455 L196.9 454.3 Z" fill="#fafa00"/></svg>
</body></html>
